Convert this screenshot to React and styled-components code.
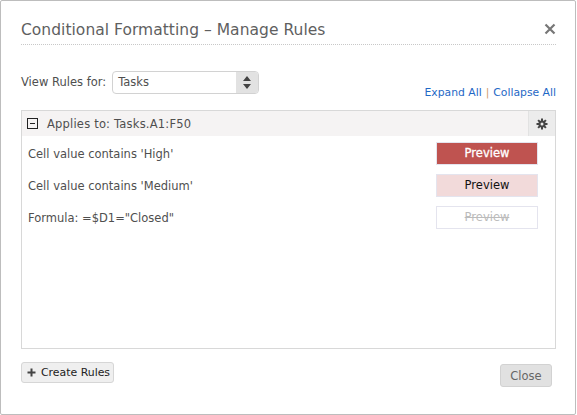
import React from 'react'
import styled, {createGlobalStyle} from 'styled-components'

const GlobalStyle = createGlobalStyle`
  html, body {
    margin: 0;
    padding: 0;
    background: #fff;
  }
  * {
    box-sizing: border-box;
  }
`

const Dialog = styled.div`
  width: 576px;
  height: 415px;
  border: 1px solid #bdbdbd;
  border-radius: 2px;
  background: #fff;
  padding: 0 19px 0 20px;
  font-family: "DejaVu Sans", "Open Sans", sans-serif;
  font-size: 11.5px;
  color: #4f4f4f;
  display: flex;
  flex-direction: column;
`

const TitleBar = styled.div`
  height: 44px;
  margin-bottom: 25px;
  border-bottom: 1px dotted #c8c8c8;
  display: flex;
  align-items: flex-end;
  justify-content: space-between;
  padding-bottom: 4px;
`

const Title = styled.h1`
  margin: 0;
  font-size: 15.5px;
  line-height: 20px;
  font-weight: 400;
  letter-spacing: 0.03px;
  color: #5f5f5f;
  white-space: nowrap;
`

const CloseX = styled.svg`
  width: 12px;
  height: 12px;
  margin: 0 0 5px 0;
`

const FilterRow = styled.div`
  height: 40px;
  display: flex;
  justify-content: space-between;
`

const FilterGroup = styled.div`
  height: 24px;
  display: flex;
  align-items: center;
  gap: 6px;
`

const FilterLabel = styled.span`
  white-space: nowrap;
`

const Select = styled.div`
  width: 147px;
  height: 23px;
  border: 1px solid #d2d2d2;
  border-radius: 4px;
  display: flex;
  align-items: stretch;
  overflow: hidden;
`

const SelectValue = styled.span`
  flex: 1;
  padding-left: 5px;
  line-height: 21px;
`

const SelectArrows = styled.span`
  width: 22px;
  background: #e2e2e2;
  display: flex;
  align-items: center;
  justify-content: center;
`

const LinkGroup = styled.div`
  margin-top: 16px;
  white-space: nowrap;
  font-size: 10.8px;
  line-height: 14px;
  color: #d09a6c;
`

const Link = styled.a`
  color: #1f68c6;
  text-decoration: none;
`

const Divider = styled.span`
  margin: 0 4px;
`

const Panel = styled.div`
  height: 239px;
  border: 1px solid #d8d8d8;
  display: flex;
  flex-direction: column;
`

const PanelHeader = styled.div`
  height: 25px;
  flex: none;
  background: #f5f3f3;
  display: flex;
  align-items: center;
  padding-left: 5px;
`

const Toggle = styled.span`
  width: 11px;
  height: 11px;
  border: 1px solid #222;
  position: relative;
  margin-right: 9px;

  &::after {
    content: '';
    position: absolute;
    left: 2px;
    right: 2px;
    top: 4px;
    height: 1px;
    background: #222;
  }
`

const HeaderText = styled.span`
  flex: 1;
  letter-spacing: 0.2px;
`

const GearCell = styled.span`
  width: 27px;
  height: 100%;
  background: #ececec;
  border-left: 1px solid #e2e2e2;
  display: flex;
  align-items: center;
  justify-content: center;
`

const RuleList = styled.div`
  padding: 6px 17px 0 6px;
  display: flex;
  flex-direction: column;
  gap: 9px;
`

const RuleRow = styled.div`
  height: 23px;
  display: flex;
  align-items: center;
  justify-content: space-between;
`

const RuleText = styled.span`
  white-space: nowrap;
`

const Preview = styled.span`
  width: 102px;
  height: 23px;
  border: 1px solid #e4e4ee;
  background: ${props => props.$bg};
  color: ${props => props.$color};
  text-decoration: ${props => (props.$strike ? 'line-through' : 'none')};
  -webkit-text-stroke: ${props => (props.$bold ? '0.3px' : '0')};
  text-align: center;
  line-height: 21px;
`

const Footer = styled.div`
  flex: 1;
  display: flex;
  justify-content: space-between;
  align-items: flex-start;
`

const CreateButton = styled.button`
  margin-top: 13px;
  width: 93px;
  height: 21px;
  padding: 0 0 0 5px;
  border: 1px solid #d6d6d6;
  border-radius: 3px;
  background: #efefef;
  color: #222;
  font: inherit;
  font-size: 10.9px;
  display: flex;
  align-items: center;
  gap: 5px;
  white-space: nowrap;
`

const CloseButton = styled.button`
  margin: 15px 4px 0 0;
  width: 52px;
  height: 23px;
  padding: 0;
  border: 1px solid #d2d2d2;
  border-radius: 3px;
  background: #e1e1e1;
  color: #666;
  font: inherit;
`

const Gear = () => (
	<svg width="12" height="12" viewBox="0 0 12 12">
		<g stroke="#444" strokeWidth="2">
			<line x1="6" y1="0.5" x2="6" y2="11.5"/>
			<line x1="0.5" y1="6" x2="11.5" y2="6"/>
			<line x1="2.1" y1="2.1" x2="9.9" y2="9.9"/>
			<line x1="9.9" y1="2.1" x2="2.1" y2="9.9"/>
		</g>
		<circle cx="6" cy="6" r="3.6" fill="#444"/>
		<circle cx="6" cy="6" r="1.5" fill="#ececec"/>
	</svg>
)

const rules = [
	{text: "Cell value contains 'High'", bg: '#bf5350', color: '#fff', bold: true},
	{text: "Cell value contains 'Medium'", bg: '#f2dada', color: '#111'},
	{text: 'Formula: =$D1="Closed"', bg: '#fff', color: '#bbb', strike: true},
]

export default function App() {
	return (
		<>
			<GlobalStyle/>
			<Dialog>
				<TitleBar>
					<Title>Conditional Formatting – Manage Rules</Title>
					<CloseX viewBox="0 0 12 12">
						<path d="M1.5 1.5 L10.5 10.5 M10.5 1.5 L1.5 10.5" stroke="#777" strokeWidth="2.2"/>
					</CloseX>
				</TitleBar>
				<FilterRow>
					<FilterGroup>
						<FilterLabel>View Rules for:</FilterLabel>
						<Select>
							<SelectValue>Tasks</SelectValue>
							<SelectArrows>
								<svg width="8" height="13" viewBox="0 0 8 13">
									<path d="M4 0 L8 5 H0 Z M0 8 H8 L4 13 Z" fill="#444"/>
								</svg>
							</SelectArrows>
						</Select>
					</FilterGroup>
					<LinkGroup>
						<Link>Expand All</Link>
						<Divider>|</Divider>
						<Link>Collapse All</Link>
					</LinkGroup>
				</FilterRow>
				<Panel>
					<PanelHeader>
						<Toggle/>
						<HeaderText>Applies to: Tasks.A1:F50</HeaderText>
						<GearCell><Gear/></GearCell>
					</PanelHeader>
					<RuleList>
						{rules.map(rule => (
							<RuleRow key={rule.text}>
								<RuleText>{rule.text}</RuleText>
								<Preview $bg={rule.bg} $color={rule.color} $bold={rule.bold} $strike={rule.strike}>
									Preview
								</Preview>
							</RuleRow>
						))}
					</RuleList>
				</Panel>
				<Footer>
					<CreateButton>
						<svg width="9" height="9" viewBox="0 0 9 9">
							<path d="M4.5 0.5 V8.5 M0.5 4.5 H8.5" stroke="#444" strokeWidth="2"/>
						</svg>
						Create Rules
					</CreateButton>
					<CloseButton>Close</CloseButton>
				</Footer>
			</Dialog>
		</>
	)
}
